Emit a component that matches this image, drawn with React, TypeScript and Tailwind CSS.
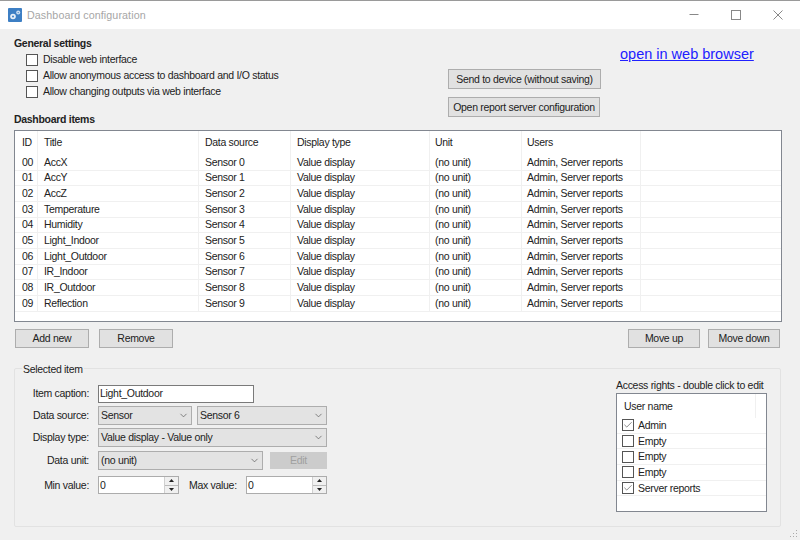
import { ChevronDown, Check } from "lucide-react";

const rows = [
  ["00", "AccX", "Sensor 0"],
  ["01", "AccY", "Sensor 1"],
  ["02", "AccZ", "Sensor 2"],
  ["03", "Temperature", "Sensor 3"],
  ["04", "Humidity", "Sensor 4"],
  ["05", "Light_Indoor", "Sensor 5"],
  ["06", "Light_Outdoor", "Sensor 6"],
  ["07", "IR_Indoor", "Sensor 7"],
  ["08", "IR_Outdoor", "Sensor 8"],
  ["09", "Reflection", "Sensor 9"],
];

const users = [
  { name: "Admin", checked: true },
  { name: "Empty", checked: false },
  { name: "Empty", checked: false },
  { name: "Empty", checked: false },
  { name: "Server reports", checked: true },
];

const Btn = ({ label, className }: { label: string; className: string }) => (
  <button className={`flex shrink-0 items-center justify-center whitespace-nowrap border border-[#adadad] bg-[#e1e1e1] text-[#222] ${className}`}>
    {label}
  </button>
);

const Box = ({ checked }: { checked?: boolean }) => (
  <span className="flex h-[12px] w-[12px] shrink-0 items-center justify-center border border-[#555] bg-white">
    {checked && <Check className="h-[10px] w-[10px] text-[#444]" strokeWidth={1.5} />}
  </span>
);

const Cell = ({ text, className }: { text: string; className: string }) => (
  <div className={`flex items-center border-r border-[#f0f0f0] ${className}`}>{text}</div>
);

const Select = ({ value, className }: { value: string; className: string }) => (
  <div className={`flex items-center justify-between border border-[#adadad] bg-[#e3e3e3] pl-[2px] pr-[2px] text-[#222] ${className}`}>
    <span>{value}</span>
    <ChevronDown className="h-[11px] w-[11px] text-[#555]" strokeWidth={1.5} />
  </div>
);

const Spin = ({ className }: { className: string }) => (
  <div className={`flex h-[18px] items-stretch border border-[#acacac] bg-white ${className}`}>
    <span className="flex-1 pl-[1px] leading-[16px]">0</span>
    <div className="flex w-[14px] flex-col border-l border-[#d0d0d0] bg-[#f0f0f0]">
      <span className="flex flex-1 items-center justify-center border-b border-[#bbb]">
        <svg width="5" height="3" viewBox="0 0 5 3">
          <path d="M2.5 0L5 3H0z" fill="#222" />
        </svg>
      </span>
      <span className="flex flex-1 items-center justify-center">
        <svg width="5" height="3" viewBox="0 0 5 3">
          <path d="M0 0H5L2.5 3z" fill="#222" />
        </svg>
      </span>
    </div>
  </div>
);

const FormRow = ({ label, className, children }: { label: string; className?: string; children: React.ReactNode }) => (
  <div className={`flex items-center ${className ?? ""}`}>
    <span className="w-[71px] shrink-0 text-right text-[#222]">{label}</span>
    <div className="ml-[9px] flex items-center">{children}</div>
  </div>
);

export default function App() {
  return (
    <div className="relative flex h-[540px] w-[800px] flex-col overflow-hidden bg-[#f0f0f0] text-[10.5px] leading-[13px] tracking-[-0.3px] text-[#222] [font-family:'Liberation_Sans',Arial,sans-serif]">
      {/* title bar */}
      <div className="flex h-[29px] shrink-0 items-center border-t border-[#9a9a9a] bg-white pl-[8px]">
        <svg width="14" height="14" viewBox="0 0 14 14">
          <rect width="14" height="14" rx="1" fill="#3d7fc4" />
          <circle cx="5" cy="8.5" r="2.8" fill="#e6eef7" />
          <circle cx="5" cy="8.5" r="1" fill="#3d7fc4" />
          <circle cx="10.2" cy="4.6" r="2" fill="#cfe0f2" />
          <circle cx="10.2" cy="4.6" r="0.7" fill="#3d7fc4" />
        </svg>
        <span className="ml-[5px] text-[10.7px] tracking-[0.1px] text-[#a6a6a6]">Dashboard configuration</span>
        <div className="ml-auto flex items-center">
          <svg width="10" height="10" viewBox="0 0 10 10" className="mr-[32px]">
            <path d="M0.5 4.5H9.5" stroke="#888" fill="none" />
          </svg>
          <svg width="10" height="10" viewBox="0 0 10 10" className="mr-[32px]">
            <rect x="0.5" y="0.5" width="9" height="9" stroke="#888" fill="none" />
          </svg>
          <svg width="10" height="10" viewBox="0 0 10 10" className="mr-[17px]">
            <path d="M0.5 0.5L9.5 9.5M9.5 0.5L0.5 9.5" stroke="#888" fill="none" />
          </svg>
        </div>
      </div>

      {/* general settings + top actions */}
      <div className="flex h-[101px] shrink-0 pl-[14px] pt-[8px]">
        <div className="w-[434px] shrink-0">
          <div className="font-bold">General settings</div>
          <div className="mt-[3px] flex flex-col gap-[3px] pl-[12px]">
            {["Disable web interface", "Allow anonymous access to dashboard and I/O status", "Allow changing outputs via web interface"].map((t) => (
              <label key={t} className="flex h-[13px] items-center gap-[5px]">
                <Box />
                <span>{t}</span>
              </label>
            ))}
          </div>
          <div className="mt-[15px] font-bold">Dashboard items</div>
        </div>
        <div className="flex w-[172px] shrink-0 flex-col gap-[8px] pt-[32px]">
          <Btn label="Send to device (without saving)" className="h-[20px] w-[153px]" />
          <Btn label="Open report server configuration" className="h-[20px] w-[152px]" />
        </div>
        <a className="mt-[8px] h-[18px] text-[14.5px] leading-[18px] tracking-normal text-[#2020ff] underline">open in web browser</a>
      </div>

      {/* list view */}
      <div className="ml-[14px] mr-[18px] h-[192px] shrink-0 border border-[#828790] bg-white">
        <div className="flex h-[24px] items-center">
          <Cell text="ID" className="h-full w-[23px] pb-[2px] pl-[7px]" />
          <Cell text="Title" className="h-full w-[161px] pb-[2px] pl-[6px]" />
          <Cell text="Data source" className="h-full w-[92px] pb-[2px] pl-[6px]" />
          <Cell text="Display type" className="h-full w-[139px] pb-[2px] pl-[6px]" />
          <Cell text="Unit" className="h-full w-[92px] pb-[2px] pl-[5px]" />
          <Cell text="Users" className="h-full w-[119px] pb-[2px] pl-[5px]" />
        </div>
        {rows.map(([id, title, source]) => (
          <div key={id} className="flex h-[15.67px] items-center border-b border-[#f0f0f0]">
            <Cell text={id} className="h-full w-[23px] pl-[7px]" />
            <Cell text={title} className="h-full w-[161px] pl-[6px]" />
            <Cell text={source} className="h-full w-[92px] pl-[6px]" />
            <Cell text="Value display" className="h-full w-[139px] pl-[6px]" />
            <Cell text="(no unit)" className="h-full w-[92px] pl-[5px]" />
            <Cell text="Admin, Server reports" className="h-full w-[119px] pl-[5px]" />
          </div>
        ))}
      </div>

      {/* list actions */}
      <div className="mt-[7px] flex h-[19px] shrink-0 pl-[15px] pr-[20px]">
        <Btn label="Add new" className="w-[74px]" />
        <Btn label="Remove" className="ml-[10px] w-[74px]" />
        <Btn label="Move up" className="ml-auto w-[72px]" />
        <Btn label="Move down" className="ml-[8px] w-[72px]" />
      </div>

      {/* selected item group */}
      <div className="relative ml-[14px] mt-[20px] flex h-[159px] w-[767px] shrink-0 rounded-[2px] border border-[#e2e2e2] pl-[3px] pt-[15px]">
        <span className="absolute left-[7px] top-[-6px] bg-[#f0f0f0] px-[1px]">Selected item</span>
        <div className="flex w-[598px] shrink-0 flex-col">
          <FormRow label="Item caption:" className="h-[19px]">
            <div className="flex h-[18px] w-[156px] items-center border border-[#7a7a7a] bg-white pl-[1px]">Light_Outdoor</div>
          </FormRow>
          <FormRow label="Data source:" className="mt-[3px] h-[19px]">
            <Select value="Sensor" className="h-[19px] w-[94px]" />
            <Select value="Sensor 6" className="ml-[5px] h-[19px] w-[130px]" />
          </FormRow>
          <FormRow label="Display type:" className="mt-[3px] h-[19px]">
            <Select value="Value display - Value only" className="h-[19px] w-[229px]" />
          </FormRow>
          <FormRow label="Data unit:" className="mt-[4px] h-[19px]">
            <Select value="(no unit)" className="h-[19px] w-[165px]" />
            <div className="ml-[7px] flex h-[17px] w-[57px] items-center justify-center bg-[#cccccc] text-[#a0a0a0]">Edit</div>
          </FormRow>
          <FormRow label="Min value:" className="mt-[6px] h-[18px]">
            <Spin className="w-[81px]" />
            <span className="ml-[10px] w-[57px]">Max value:</span>
            <Spin className="w-[81px]" />
          </FormRow>
        </div>
        <div className="mt-[-3px] flex w-[151px] shrink-0 flex-col">
          <span className="h-[12px] leading-[9px] whitespace-nowrap">Access rights - double click to edit</span>
          <div className="relative h-[119px] border border-[#828790] bg-white">
            <div className="flex h-[24px] w-[139px] items-center border-r border-[#f0f0f0] pl-[7px]">User name</div>
            {users.map((u, i) => (
              <div key={i} className="flex h-[15.7px] items-center gap-[4px] border-b border-[#f0f0f0] pl-[5px]">
                <Box checked={u.checked} />
                <span>{u.name}</span>
              </div>
            ))}
          </div>
        </div>
      </div>

      {/* size grip */}
      <svg width="8" height="8" viewBox="0 0 8 8" className="absolute bottom-[2px] right-[2px]">
        <path d="M6 0h1v1H6zM6 3h1v1H6zM3 3h1v1H3zM6 6h1v1H6zM3 6h1v1H3zM0 6h1v1H0z" fill="#aaa" />
      </svg>
    </div>
  );
}
